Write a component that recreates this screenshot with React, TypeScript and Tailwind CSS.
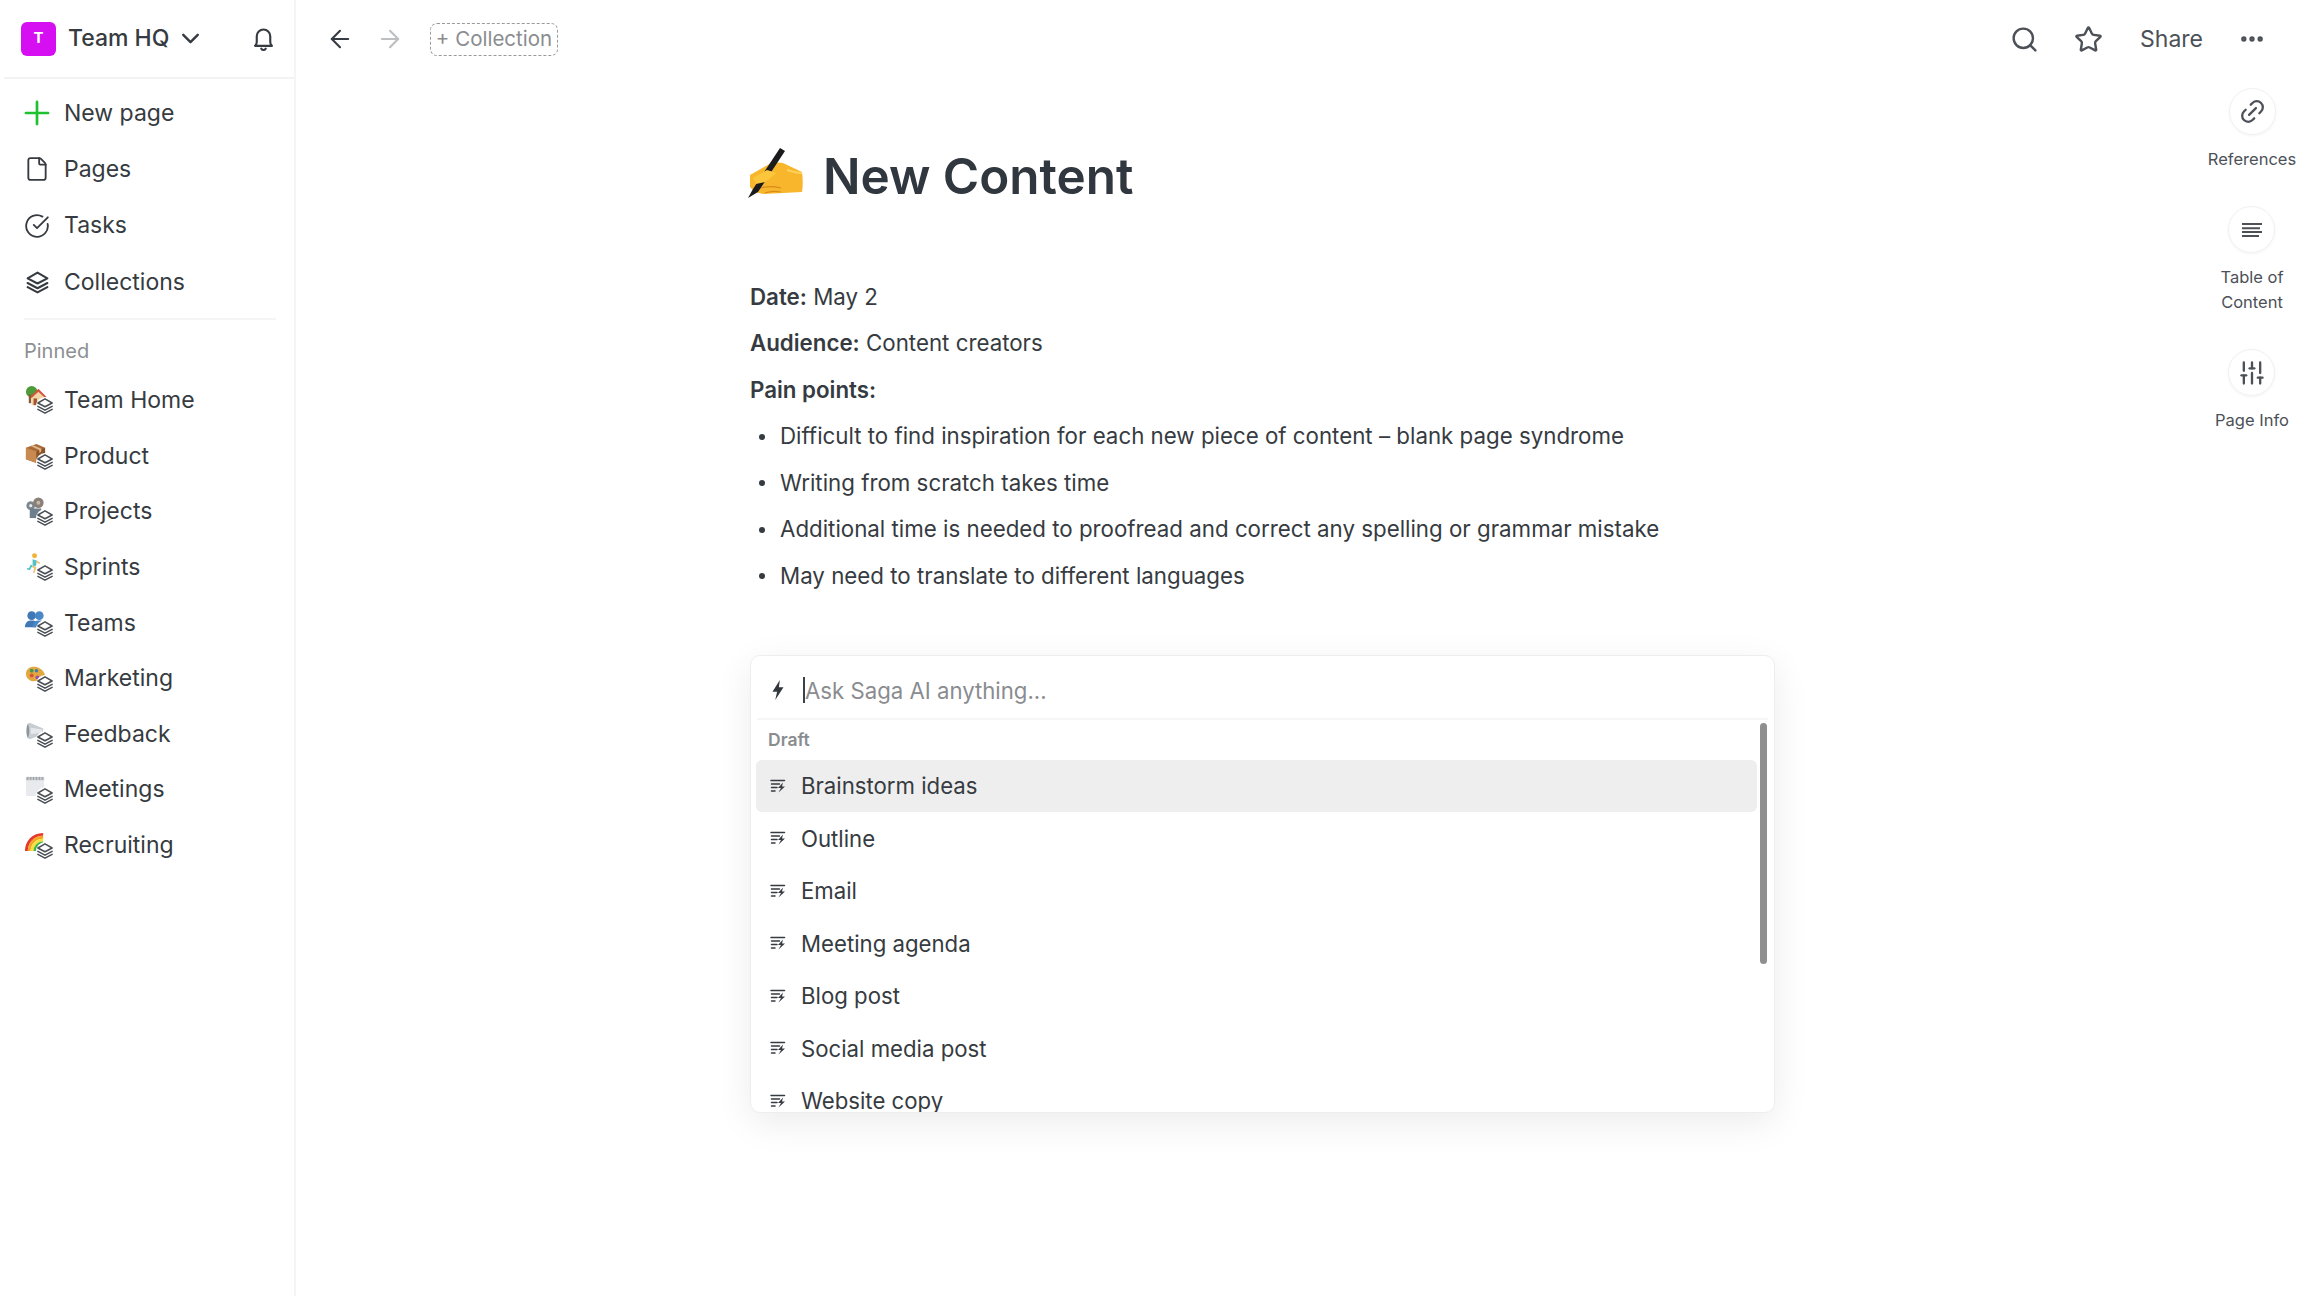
import { ReactNode } from "react";
import {
  ArrowLeft,
  ArrowRight,
  ChevronDown,
  CircleCheckBig,
  Ellipsis,
  File,
  Link2,
  Plus,
  Search,
  SlidersVertical,
  Star,
} from "lucide-react";

const StackIcon = ({ className }: { className?: string }) => (
  <svg viewBox="0 0 24 24" fill="none" stroke="currentColor" strokeWidth="2" strokeLinejoin="round" strokeLinecap="round" className={className}>
    <path d="M12 2.5 21.5 8 12 13 2.5 8Z" />
    <path d="M2.5 12.5 12 17.5l9.5-5" />
    <path d="M2.5 16.5 12 21.5l9.5-5" />
  </svg>
);

const DraftIcon = () => (
  <svg viewBox="0 0 16 14" fill="none" stroke="#363b41" strokeWidth="1.5" strokeLinecap="round" className="w-[16px] h-[14px]">
    <path d="M1 1.5h13.500" />
    <path d="M1.500 5h8" />
    <path d="M1.500 8.500h5.500" />
    <path d="M1.500 12h3.500" />
    <path d="M13 3.500 8 9h3l-2.500 4.500L15 7.500h-3Z" fill="#363b41" stroke="none" />
  </svg>
);

const emojis: Record<string, ReactNode> = {
  home: (
    <>
      <circle cx="8" cy="7" r="6" fill="#4f9a3a" />
      <rect x="5" y="10" width="2.500" height="9" fill="#8a5a30" />
      <path d="M8 12 15 5l7 7v9H8Z" fill="#f1d6a8" />
      <path d="M6.500 12.500 15 4l8.500 8.500-1.500 1L15 7l-7 6.500Z" fill="#d9503f" />
      <rect x="10" y="14" width="3.500" height="7" fill="#a5532f" />
    </>
  ),
  box: (
    <>
      <path d="M2 7 13 3l9 4v12l-9 4-11-4Z" fill="#a86a3a" />
      <path d="M2 7 13 11v12L2 19Z" fill="#c98a52" />
      <path d="M13 11l9-4v12l-9 4Z" fill="#8a5428" />
      <path d="M7 5.200 16 9.500v3L18 11V8L9 4.200Z" fill="#e2b98a" />
    </>
  ),
  projector: (
    <>
      <circle cx="7" cy="9" r="4.500" fill="#7c8790" />
      <circle cx="7" cy="9" r="1.600" fill="#e8ecef" />
      <circle cx="15" cy="6" r="5.500" fill="#8a8078" />
      <circle cx="15" cy="6" r="2" fill="#c4b8a8" />
      <path d="M6 12h12v10H6Z" fill="#6d7f8c" />
    </>
  ),
  runner: (
    <>
      <circle cx="11" cy="4" r="2.600" fill="#f2b33d" />
      <path d="M9 7.500 14 9l-2 6-3-1Z" fill="#4fc3c8" />
      <path d="M9 14l4 2-2 6-1.600-.4L10.500 17 7 15Z" fill="#f2c27a" />
      <path d="M9 14 6 19l-3-1 .4-1.400 1.800.4L7 13Z" fill="#4fc3c8" />
      <path d="M13 9l4 2-.6 1.200L12 11Z" fill="#f2c27a" />
    </>
  ),
  people: (
    <>
      <circle cx="8" cy="8" r="4.500" fill="#3f78b5" />
      <path d="M1 20c0-5 3-7 7-7s7 2 7 7Z" fill="#3f78b5" />
      <circle cx="16" cy="8" r="4.500" fill="#4a87c6" />
      <path d="M9 20c0-5 3-7 7-7s7 2 7 7Z" fill="#4a87c6" />
    </>
  ),
  palette: (
    <>
      <path d="M2 11c0-5 5-8 10-7s10 5 10 10-4 6-7 5-6 1-9-1-4-4-4-7Z" fill="#e2a83e" />
      <circle cx="8" cy="8" r="2" fill="#3f9a52" />
      <circle cx="13" cy="8" r="1.800" fill="#3f78b5" />
      <circle cx="8" cy="13" r="2" fill="#d9503f" />
      <circle cx="14" cy="15" r="2" fill="#9a4fb5" />
    </>
  ),
  megaphone: (
    <>
      <path d="M4 5 6 4l14 6v6L6 21l-2-1Z" fill="#c8cdd2" />
      <path d="M4 5c-2 4-2 11 0 15 2-4 2-11 0-15Z" fill="#8c949b" />
      <path d="M7 9l12 2v3L7 16Z" fill="#e6e9eb" />
    </>
  ),
  notepad: (
    <>
      <rect x="2" y="2" width="19" height="20" rx="1" fill="#e8eaed" />
      <rect x="2" y="2" width="19" height="3.500" fill="#c4c8cc" />
      <path d="M4 2v3M7 2v3M10 2v3M13 2v3M16 2v3M19 2v3" stroke="#8c9094" strokeWidth="0.8" />
    </>
  ),
  rainbow: (
    <>
      <path d="M1 22C1 12 8 3 20 3v3C10 6 4 14 4 22Z" fill="#e5392f" />
      <path d="M4 22C4 14 10 6 20 6v3C12 9 7 15 7 22Z" fill="#f4a623" />
      <path d="M7 22c0-7 5-13 13-13v3c-6 0-10 5-10 10Z" fill="#f7df3c" />
      <path d="M10 22c0-5 4-10 10-10v3c-4 0-7 3-7 7Z" fill="#3eb54a" />
      <path d="M13 22c0-4 3-7 7-7v3c-2 0-4 2-4 4Z" fill="#2f7fd6" />
    </>
  ),
};

const pinned = [
  { name: "Team Home", icon: "home" },
  { name: "Product", icon: "box" },
  { name: "Projects", icon: "projector" },
  { name: "Sprints", icon: "runner" },
  { name: "Teams", icon: "people" },
  { name: "Marketing", icon: "palette" },
  { name: "Feedback", icon: "megaphone" },
  { name: "Meetings", icon: "notepad" },
  { name: "Recruiting", icon: "rainbow" },
];

const drafts = [
  "Brainstorm ideas",
  "Outline",
  "Email",
  "Meeting agenda",
  "Blog post",
  "Social media post",
  "Website copy",
];

const bullets = [
  "Difficult to find inspiration for each new piece of content – blank page syndrome",
  "Writing from scratch takes time",
  "Additional time is needed to proofread and correct any spelling or grammar mistake",
  "May need to translate to different languages",
];

const NavItem = ({ icon, label }: { icon: ReactNode; label: string }) => (
  <div className="flex items-center h-[56.3px] pl-[24px]">
    <div className="w-[26px] h-[26px] flex items-center justify-center">{icon}</div>
    <span className="ml-[14px] text-[23px]">{label}</span>
  </div>
);

const RailButton = ({ icon, label }: { icon: ReactNode; label: ReactNode }) => (
  <div className="flex flex-col items-center">
    <div className="w-[47px] h-[47px] rounded-full border border-[#f0f0f0] shadow-[0_1px_3px_rgba(0,0,0,0.05)] flex items-center justify-center">
      {icon}
    </div>
    <div className="mt-[12px] text-[16.5px] leading-[25px] text-center text-[#4c5157]">{label}</div>
  </div>
);

export default function App() {
  return (
    <div className="flex h-[1296px] w-[2320px] overflow-hidden bg-white text-[#363b41] font-['Inter',sans-serif]">
      {/* Sidebar */}
      <aside className="w-[296px] shrink-0 border-r-2 border-[#f5f5f5] flex flex-col">
        <div className="h-[79px] ml-[4px] border-b-2 border-[#f3f3f3] flex items-center pl-[17px]">
          <div className="w-[35px] h-[34px] rounded-[6px] bg-[#d60ef2] text-white text-[15px] font-bold flex items-center justify-center">
            T
          </div>
          <span className="ml-[12px] text-[23px] font-medium">Team HQ</span>
          <ChevronDown className="ml-[7px] w-[29px] h-[29px]" strokeWidth={2} />
          <svg viewBox="0 0 24 24" fill="none" stroke="currentColor" strokeWidth="1.900" strokeLinejoin="round" strokeLinecap="round" className="ml-[45px] w-[27px] h-[27px]">
            <path d="M4.500 18.500c1-.8 1.500-2 1.500-3.500v-5a6 6 0 0 1 12 0v5c0 1.500.5 2.700 1.500 3.500Z" />
            <path d="M10 21c.5.8 1.200 1.200 2 1.200s1.500-.4 2-1.200" />
          </svg>
        </div>

        <div className="pt-[6px]">
          <NavItem icon={<Plus className="w-[38px] h-[38px] shrink-0 text-[#1fc12e]" strokeWidth={1.7} />} label="New page" />
          <NavItem icon={<File className="w-[26px] h-[26px]" strokeWidth={1.7} />} label="Pages" />
          <NavItem icon={<CircleCheckBig className="w-[26px] h-[26px]" strokeWidth={1.7} />} label="Tasks" />
          <NavItem icon={<StackIcon className="w-[25px] h-[25px]" />} label="Collections" />
        </div>

        <div className="mt-[8px] mx-[24px] mr-[18px] h-[2px] bg-[#f5f5f5]" />

        <div className="mt-[16px] pl-[24px] h-[30px] flex items-center text-[20px] text-[#8d8f92]">Pinned</div>

        <div className="mt-[6.500px]">
          {pinned.map((item) => (
            <div key={item.name} className="flex items-center h-[55.6px] pl-[24px]">
              <div className="relative w-[30px] h-[30px]">
                <svg viewBox="0 0 24 24" className="w-[23px] h-[23px]">
                  {emojis[item.icon]}
                </svg>
                <div className="absolute left-[12px] top-[12px] w-[18px] h-[18px] rounded-full bg-white flex items-center justify-center">
                  <StackIcon className="w-[18px] h-[18px] text-[#4a4f55]" />
                </div>
              </div>
              <span className="ml-[10px] text-[23px]">{item.name}</span>
            </div>
          ))}
        </div>
      </aside>

      <main className="flex-1 flex flex-col min-w-0">
        {/* Top bar */}
        <header className="h-[78px] shrink-0 flex items-center pl-[30px] pr-[54px]">
          <ArrowLeft className="w-[28px] h-[28px]" strokeWidth={1.8} />
          <ArrowRight className="ml-[22px] w-[28px] h-[28px] text-[#bdbfc1]" strokeWidth={1.8} />
          <div className="ml-[26px] h-[33px] w-[128px] rounded-[7px] border border-dashed border-[#9a9a9a] flex items-center justify-center text-[20.5px] text-[#8a8c8f]">
            + Collection
          </div>
          <div className="ml-auto flex items-center">
            <Search className="w-[29px] h-[29px] text-[#4c5157]" strokeWidth={2} />
            <Star className="ml-[35px] w-[29px] h-[29px] text-[#4c5157]" strokeWidth={2} />
            <span className="ml-[37px] text-[23px] text-[#4c5157]">Share</span>
            <Ellipsis className="ml-[35px] w-[28px] h-[28px] text-[#4c5157]" strokeWidth={2.6} />
          </div>
        </header>

        <div className="flex-1 flex min-h-0">
          {/* Page */}
          <div className="flex-1 pl-[454px]">
            <div className="flex items-center h-[80px] mt-[59px]">
              <svg viewBox="0 0 60 60" className="w-[60px] h-[60px] -ml-[3px] -mt-[2px]">
                <path d="M3 29 26 16l10 1 19 9c1 7 1 14 0 20l-19 1-20 1-8-2-5-5Z" fill="#f8b62d" />
                <path d="M14 42c6-2 12-2 20 0M18 47c5-2 10-2 16-1" stroke="#d98a1c" strokeWidth="1.200" fill="none" />
                <path d="M40 24c6 2 12 3 15 3" stroke="#fcd25a" strokeWidth="2" fill="none" />
                <path d="M1 52 6 43 33 2 38 5 11 46Z" fill="#1b1b1d" />
                <path d="M6 32 20 24l10 3-12 9-9 2Z" fill="#fbc53c" />
              </svg>
              <h1 className="ml-[16px] text-[49.4px] font-semibold text-[#31373e] leading-none">New Content</h1>
            </div>

            <div className="mt-[56.5px] text-[22.3px] leading-[46.6px]">
              <div><b className="font-semibold">Date:</b> May 2</div>
              <div><b className="font-semibold">Audience:</b> Content creators</div>
              <div><b className="font-semibold">Pain points:</b></div>
              <ul className="list-none">
                {bullets.map((b) => (
                  <li key={b} className="flex items-center">
                    <span className="ml-[9px] w-[6px] h-[6px] rounded-full bg-[#363b41]" />
                    <span className="ml-[15px]">{b}</span>
                  </li>
                ))}
              </ul>
            </div>

            {/* Ask AI popover */}
            <div className="relative mt-[55px] w-[1025px] h-[458px] rounded-[10px] border border-[#eeeeee] bg-white shadow-[0_10px_36px_rgba(0,0,0,0.08)] overflow-hidden">
              <div className="h-[64px] mx-[6px] pt-[7px] border-b-2 border-[#f6f6f6] flex items-center pl-[14px]">
                <svg viewBox="0 0 14 24" className="w-[14px] h-[22px]">
                  <path d="M9 1 1 14h5l-2 9 9-14H8Z" fill="#33383e" />
                </svg>
                <div className="ml-[18px] w-[2px] h-[26px] bg-[#3c4147]" />
                <span className="text-[22.2px] text-[#8a8c8f]">Ask Saga AI anything...</span>
              </div>
              <div className="pl-[17px] pt-[7px] h-[40px] text-[17.5px] font-semibold text-[#8a8c8f]">Draft</div>
              <div className="mx-[5px]">
                {drafts.map((d, i) => (
                  <div
                    key={d}
                    className={`flex items-center h-[52.5px] w-[1001px] rounded-[6px] pl-[14px] ${i === 0 ? "bg-[#eeeeee]" : ""}`}
                  >
                    <DraftIcon />
                    <span className="ml-[15px] text-[22.2px]">{d}</span>
                  </div>
                ))}
              </div>
              {/* scrollbar thumb */}
              <div className="absolute left-[1009px] top-[67px] w-[7px] h-[241px] rounded-full bg-[#8f8f8f]" />
            </div>
          </div>

          {/* Right rail */}
          <div className="w-[136px] shrink-0 flex flex-col items-center pt-[10px]">
            <RailButton icon={<Link2 className="w-[29px] h-[29px] -rotate-45 text-[#4c5157]" strokeWidth={1.9} />} label="References" />
            <div className="mt-[34px]">
              <RailButton
                icon={
                  <svg viewBox="0 0 24 24" className="w-[24px] h-[24px]" stroke="#4c5157" strokeWidth="2">
                    <path d="M2 6h20M2 10.300h18M2 14h20M2 18h17" />
                  </svg>
                }
                label={
                  <>
                    Table of
                    <br />
                    Content
                  </>
                }
              />
            </div>
            <div className="mt-[34px]">
              <RailButton icon={<SlidersVertical className="w-[28px] h-[28px] text-[#4c5157]" strokeWidth={2} />} label="Page Info" />
            </div>
          </div>
        </div>
      </main>
    </div>
  );
}
